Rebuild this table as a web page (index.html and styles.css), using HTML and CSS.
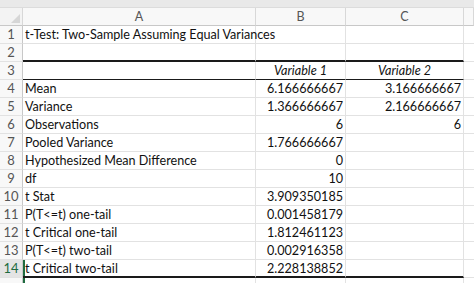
FILE: index.html
```html
<!DOCTYPE html>
<html>
<head>
<meta charset="utf-8">
<link rel="stylesheet" href="styles.css">
</head>
<body>
<div class="topstrip"></div>
<div class="sheet">
  <div class="corner"><span class="tri"></span></div>
  <div class="colhead">A</div>
  <div class="colhead">B</div>
  <div class="colhead">C</div>
  <div class="colhead last"></div>

  <div class="rowhead">1</div>
  <div class="cell">t-Test: Two-Sample Assuming Equal Variances</div>
  <div class="cell"></div><div class="cell"></div><div class="cell last"></div>

  <div class="rowhead">2</div>
  <div class="cell thickb"></div><div class="cell thickb"></div><div class="cell thickb"></div><div class="cell last"></div>

  <div class="rowhead">3</div>
  <div class="cell darkb"></div>
  <div class="cell darkb ital">Variable 1</div>
  <div class="cell darkb ital">Variable 2</div>
  <div class="cell last"></div>

  <div class="rowhead">4</div>
  <div class="cell">Mean</div><div class="cell num">6.166666667</div><div class="cell num">3.166666667</div><div class="cell last"></div>

  <div class="rowhead">5</div>
  <div class="cell">Variance</div><div class="cell num">1.366666667</div><div class="cell num">2.166666667</div><div class="cell last"></div>

  <div class="rowhead">6</div>
  <div class="cell">Observations</div><div class="cell num">6</div><div class="cell num">6</div><div class="cell last"></div>

  <div class="rowhead">7</div>
  <div class="cell">Pooled Variance</div><div class="cell num">1.766666667</div><div class="cell"></div><div class="cell last"></div>

  <div class="rowhead">8</div>
  <div class="cell">Hypothesized Mean Difference</div><div class="cell num">0</div><div class="cell"></div><div class="cell last"></div>

  <div class="rowhead">9</div>
  <div class="cell">df</div><div class="cell num">10</div><div class="cell"></div><div class="cell last"></div>

  <div class="rowhead">10</div>
  <div class="cell">t Stat</div><div class="cell num">3.909350185</div><div class="cell"></div><div class="cell last"></div>

  <div class="rowhead">11</div>
  <div class="cell">P(T&lt;=t) one-tail</div><div class="cell num">0.001458179</div><div class="cell"></div><div class="cell last"></div>

  <div class="rowhead">12</div>
  <div class="cell">t Critical one-tail</div><div class="cell num">1.812461123</div><div class="cell"></div><div class="cell last"></div>

  <div class="rowhead">13</div>
  <div class="cell">P(T&lt;=t) two-tail</div><div class="cell num">0.002916358</div><div class="cell"></div><div class="cell last"></div>

  <div class="rowhead active">14</div>
  <div class="cell thickb sel">t Critical two-tail</div><div class="cell thickb num">2.228138852</div><div class="cell thickb"></div><div class="cell last"></div>

  <div class="rowhead"></div>
  <div class="cell sel2"></div><div class="cell"></div><div class="cell"></div><div class="cell last"></div>
</div>
</body>
</html>
```
FILE: styles.css
```css
html, body {
  margin: 0;
  padding: 0;
  background: #ffffff;
  overflow: hidden;
}
body {
  width: 474px;
  height: 283px;
  font-family: Lato, "Open Sans", sans-serif;
  font-size: 12.6px;
  color: #111;
}
.topstrip {
  height: 8px;
  background: #e9e9e9;
  border-bottom: 1px solid #dcdcdc;
  box-sizing: border-box;
}
.sheet {
  display: grid;
  grid-template-columns: 23px 233px 90px 118px 10px;
  grid-template-rows: 18px repeat(15, 18px);
}
.corner {
  background: #f3f3f3;
  border-right: 1px solid #d8d8d8;
  border-bottom: 1px solid #c8c8c8;
  box-sizing: border-box;
  position: relative;
}
.tri {
  position: absolute;
  right: 2px;
  bottom: 2px;
  width: 0;
  height: 0;
  border-left: 9px solid transparent;
  border-bottom: 9px solid #d6d6d6;
}
.colhead {
  background: #f8f8f8;
  border-right: 1px solid #d8d8d8;
  border-bottom: 1px solid #c8c8c8;
  box-sizing: border-box;
  color: #555;
  text-align: center;
  line-height: 17px;
  font-size: 12.5px;
}
.rowhead {
  background: #f8f8f8;
  border-right: 1px solid #c8c8c8;
  border-bottom: 1px solid #e2e2e2;
  box-sizing: border-box;
  color: #555;
  text-align: center;
  line-height: 17px;
  font-size: 13px;
}
.rowhead.active {
  background: #e4e4e4;
  color: #1d6b3f;
}
.cell {
  border-right: 1px solid #e2e2e2;
  border-bottom: 1px solid #e2e2e2;
  box-sizing: border-box;
  padding: 0 2px;
  line-height: 17px;
  white-space: nowrap;
  overflow: visible;
}
.cell.last {
  border-right: none;
}
.num {
  text-align: right;
}
.ital {
  font-style: italic;
  text-align: center;
}
.thickb {
  border-bottom: 2px solid #1a1a1a;
}
.darkb {
  border-bottom: 1px solid #1a1a1a;
}
.sel {
  box-shadow: inset 2px 0 0 #1f6b40;
}
.sel2 {
  box-shadow: inset 2px 0 0 #1f6b40;
}
```
